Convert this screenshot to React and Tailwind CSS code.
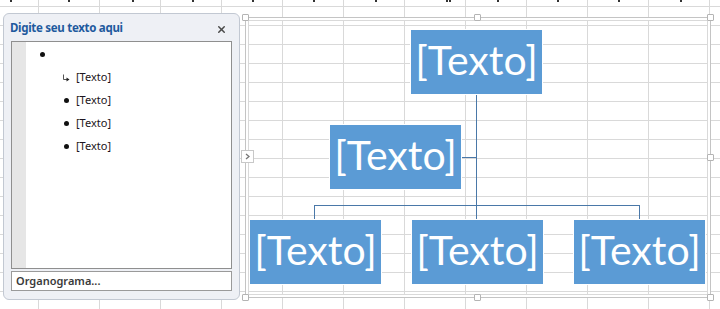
import { X } from 'lucide-react';

const TOP_MARKS = [10, 68, 132, 192, 252, 313, 375, 446, 449, 497, 557, 618, 680];

const NODES = [
  { left: 'left-[410px]', top: 'top-[29px]' },
  { left: 'left-[329px]', top: 'top-[124px]' },
  { left: 'left-[249px]', top: 'top-[219px]' },
  { left: 'left-[411px]', top: 'top-[219px]' },
  { left: 'left-[573px]', top: 'top-[219px]' },
];

const HANDLES = [
  'left-[242px] top-[14px]',
  'left-[474px] top-[14px]',
  'left-[707px] top-[14px]',
  'left-[707px] top-[154px]',
  'left-[242px] top-[294px]',
  'left-[474px] top-[294px]',
  'left-[707px] top-[294px]',
];

function Bullet() {
  return <span className="block w-[5px] h-[5px] rounded-full bg-[#111]" />;
}

function PaneRow({ level, arrow, children }) {
  return (
    <div className={`flex items-center h-[23px] ${level === 1 ? 'pl-[12px]' : 'pl-[36px]'}`}>
      <span className="w-[8px] flex justify-center">
        {arrow ? (
          <svg width="8" height="8" viewBox="0 0 8 8">
            <path d="M1.5 0.5V5.5H5" stroke="#555" strokeWidth="1" fill="none" />
            <path d="M4.5 3.5L7.5 5.5L4.5 7.5Z" fill="#222" />
          </svg>
        ) : (
          <Bullet />
        )}
      </span>
      {children && <span className="ml-[6px] text-[11px] text-[#1d1520]">{children}</span>}
    </div>
  );
}

function TextPane() {
  return (
    <div className="absolute left-[3px] top-[13px] w-[237px] h-[287px] rounded-[6px] border border-[#c2c8d2] bg-[#eef0f5] flex flex-col font-['Noto_Sans',sans-serif]">
      <div className="h-[27px] flex items-center justify-between pl-[6px] pr-[12px]">
        <span className="text-[11.5px] font-bold text-[#1f5a9e] tracking-[-0.3px]">Digite seu texto aqui</span>
        <X className="w-[11px] h-[11px] text-[#4a4a4a] mt-[4px]" strokeWidth={3.2} />
      </div>
      <div className="mx-[7px] h-[228px] border border-[#8f8f8f] bg-white flex">
        <div className="w-[14px] bg-[#e6e6e6]" />
        <div className="flex-1 pt-[1px]">
          <PaneRow level={1} />
          <PaneRow level={2} arrow>[Texto]</PaneRow>
          <PaneRow level={2}>[Texto]</PaneRow>
          <PaneRow level={2}>[Texto]</PaneRow>
          <PaneRow level={2}>[Texto]</PaneRow>
        </div>
      </div>
      <div className="mx-[7px] mt-[2px] h-[20px] border border-[#9a9a9a] bg-white flex items-center pl-[4px]">
        <span className="text-[11px] font-semibold text-[#3a3a3a]">Organograma...</span>
      </div>
    </div>
  );
}

export default function App() {
  return (
    <div className="relative w-[720px] h-[309px] overflow-hidden bg-white bg-[linear-gradient(to_right,#d9d9d9_1px,transparent_1px),linear-gradient(to_bottom,#d9d9d9_1px,transparent_1px)] bg-[length:61px_19px] bg-[position:38px_6px]">
      {TOP_MARKS.map((x) => (
        <span key={x} className="absolute top-0 w-[2px] h-[2px] bg-[#333]" style={{ left: x }} />
      ))}

      {/* selection frame */}
      <div className="absolute left-[245px] top-[17px] w-[466px] h-[281px] border border-[#c4c4c4]">
        <div className="h-full border-2 border-white">
          <div className="h-full border border-[#d9d9d9]" />
        </div>
      </div>
      {HANDLES.map((h) => (
        <span key={h} className={`absolute ${h} w-[7px] h-[7px] rounded-[1px] border border-[#b4b4b4] bg-white`} />
      ))}
      <div className="absolute left-[241px] top-[150px] w-[13px] h-[13px] border border-[#c8c8c8] bg-white flex items-center justify-center">
        <svg width="5" height="7" viewBox="0 0 5 7">
          <path d="M1 1L4 3.5L1 6" stroke="#777" strokeWidth="1.3" fill="none" />
        </svg>
      </div>

      {/* connectors */}
      <div className="absolute left-[476px] top-[95px] w-px h-[124px] bg-[#4a78a8]" />
      <div className="absolute left-[462px] top-[157px] w-[15px] h-px bg-[#4a78a8]" />
      <div className="absolute left-[314px] top-[205px] w-[326px] h-px bg-[#4a78a8]" />
      <div className="absolute left-[314px] top-[205px] w-px h-[14px] bg-[#4a78a8]" />
      <div className="absolute left-[639px] top-[205px] w-px h-[14px] bg-[#4a78a8]" />

      {NODES.map((n, i) => (
        <div
          key={i}
          className={`absolute ${n.left} ${n.top} w-[133px] h-[66px] border border-white bg-[#5b9bd5] flex items-center justify-center pb-[5px]`}
        >
          <span className="text-white text-[41px] leading-none font-['Lato',sans-serif]">[Texto]</span>
        </div>
      ))}

      <TextPane />
    </div>
  );
}
